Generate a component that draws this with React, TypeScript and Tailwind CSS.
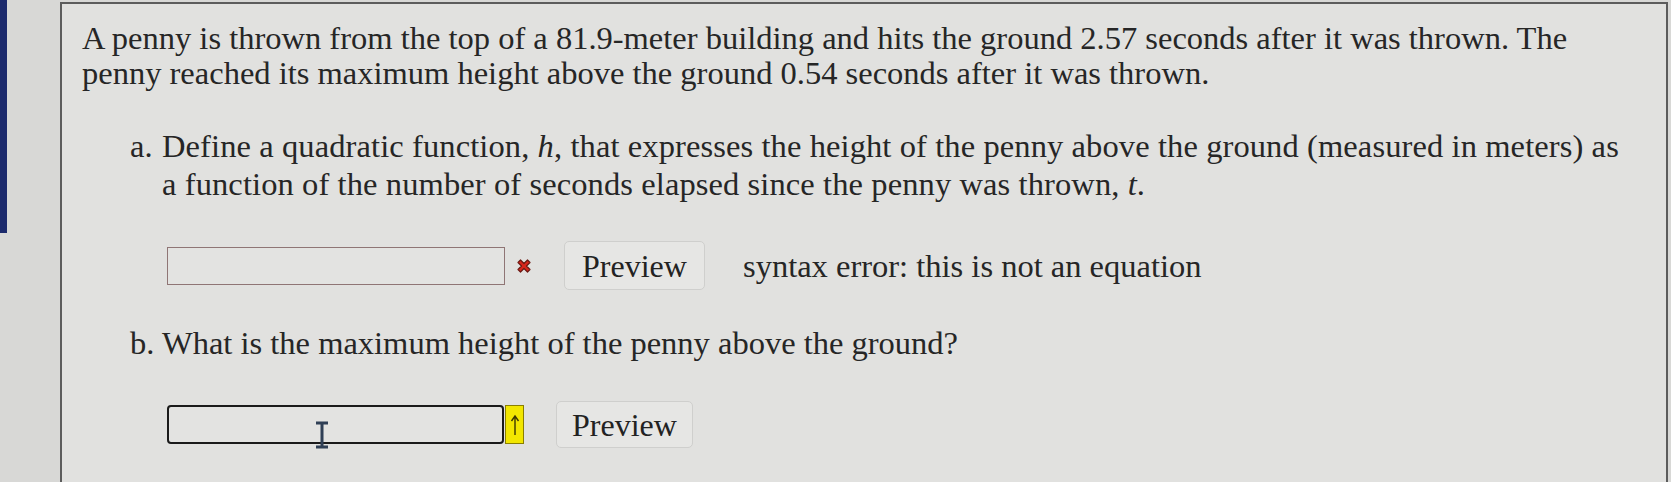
import React from "react";

const serif = { fontFamily: '"Liberation Serif", "Times New Roman", serif' };

function ErrorMark() {
  return (
    <svg width="16" height="16" viewBox="0 0 16 16" className="shrink-0">
      <path
        d="M2 4.5 L4.5 2 L8 5.5 L11.5 2 L14 4.5 L10.5 8 L14 11.5 L11.5 14 L8 10.5 L4.5 14 L2 11.5 L5.5 8 Z"
        fill="#d8261c"
        stroke="#6a1812"
        strokeWidth="1.2"
        strokeLinejoin="round"
      />
    </svg>
  );
}

function PreviewButton({ w, h }: { w: string; h: string }) {
  return (
    <button
      className={`${w} ${h} shrink-0 rounded-[5px] border border-[#cfcfcd] bg-[#e6e6e4] text-[32px] text-[#222] flex items-center justify-center`}
    >
      Preview
    </button>
  );
}

export default function App() {
  return (
    <div className="flex min-h-[482px] bg-[#d8d8d6] text-[#262626]" style={serif}>
      <div className="w-[7px] h-[233px] shrink-0 bg-[#1c2a6c]" />
      <div className="w-[53px] shrink-0" />
      <div className="flex-1 mr-[3px] mt-[2px] border-l-2 border-t-2 border-r-2 border-[#5c5c5c] bg-[#e1e1df] pl-[20px] pt-[17px] text-[32.5px]">
        <p className="leading-[35px] whitespace-nowrap">
          A penny is thrown from the top of a 81.9-meter building and hits the ground 2.57 seconds after it was thrown. The
          <br />
          penny reached its maximum height above the ground 0.54 seconds after it was thrown.
        </p>

        <div className="ml-[48px] mt-[36px] flex">
          <span className="w-[32px] shrink-0 leading-[38px]">a.</span>
          <div className="flex flex-col">
            <p className="leading-[38px] whitespace-nowrap tracking-[0.1px]">
              Define a quadratic function, <i>h</i>, that expresses the height of the penny above the ground (measured in meters) as
              <br />
              a function of the number of seconds elapsed since the penny was thrown, <i>t</i>.
            </p>
            <div className="mt-[38px] h-[49px] flex items-center">
              <div className="ml-[5px] w-[338px] h-[38px] border border-[#8f7575] bg-[#e3e3e1]" />
              <div className="ml-[11px] mr-[32px]">
                <ErrorMark />
              </div>
              <PreviewButton w="w-[141px]" h="h-[49px]" />
              <span className="ml-[38px] leading-[38px] whitespace-nowrap">syntax error: this is not an equation</span>
            </div>
          </div>
        </div>

        <div className="ml-[48px] mt-[34px] flex">
          <span className="w-[32px] shrink-0 leading-[38px]">b.</span>
          <div className="flex flex-col">
            <p className="leading-[38px] whitespace-nowrap">What is the maximum height of the penny above the ground?</p>
            <div className="mt-[39px] h-[47px] flex items-center">
              <div className="relative ml-[5px] w-[337px] h-[39px] rounded-[4px] border-2 border-[#1a1a1a] bg-[#e3e3e1]">
                <svg width="16" height="28" viewBox="0 0 16 28" className="absolute left-[145px] top-[14px]">
                  <path d="M2 2 H14 M8 2 V26 M2 26 H14" stroke="#2f3f55" strokeWidth="3" fill="none" />
                </svg>
              </div>
              <div className="ml-[1px] w-[19px] h-[39px] bg-[#f2e600] border border-[#8a7f00] flex items-center justify-center">
                <svg width="10" height="22" viewBox="0 0 10 22">
                  <path d="M5 21 V3 M1.5 7 L5 2 L8.5 7" stroke="#3a3500" strokeWidth="1.4" fill="none" />
                </svg>
              </div>
              <div className="ml-[32px]">
                <PreviewButton w="w-[137px]" h="h-[47px]" />
              </div>
            </div>
          </div>
        </div>
        <div className="h-[30px]" />
      </div>
    </div>
  );
}
